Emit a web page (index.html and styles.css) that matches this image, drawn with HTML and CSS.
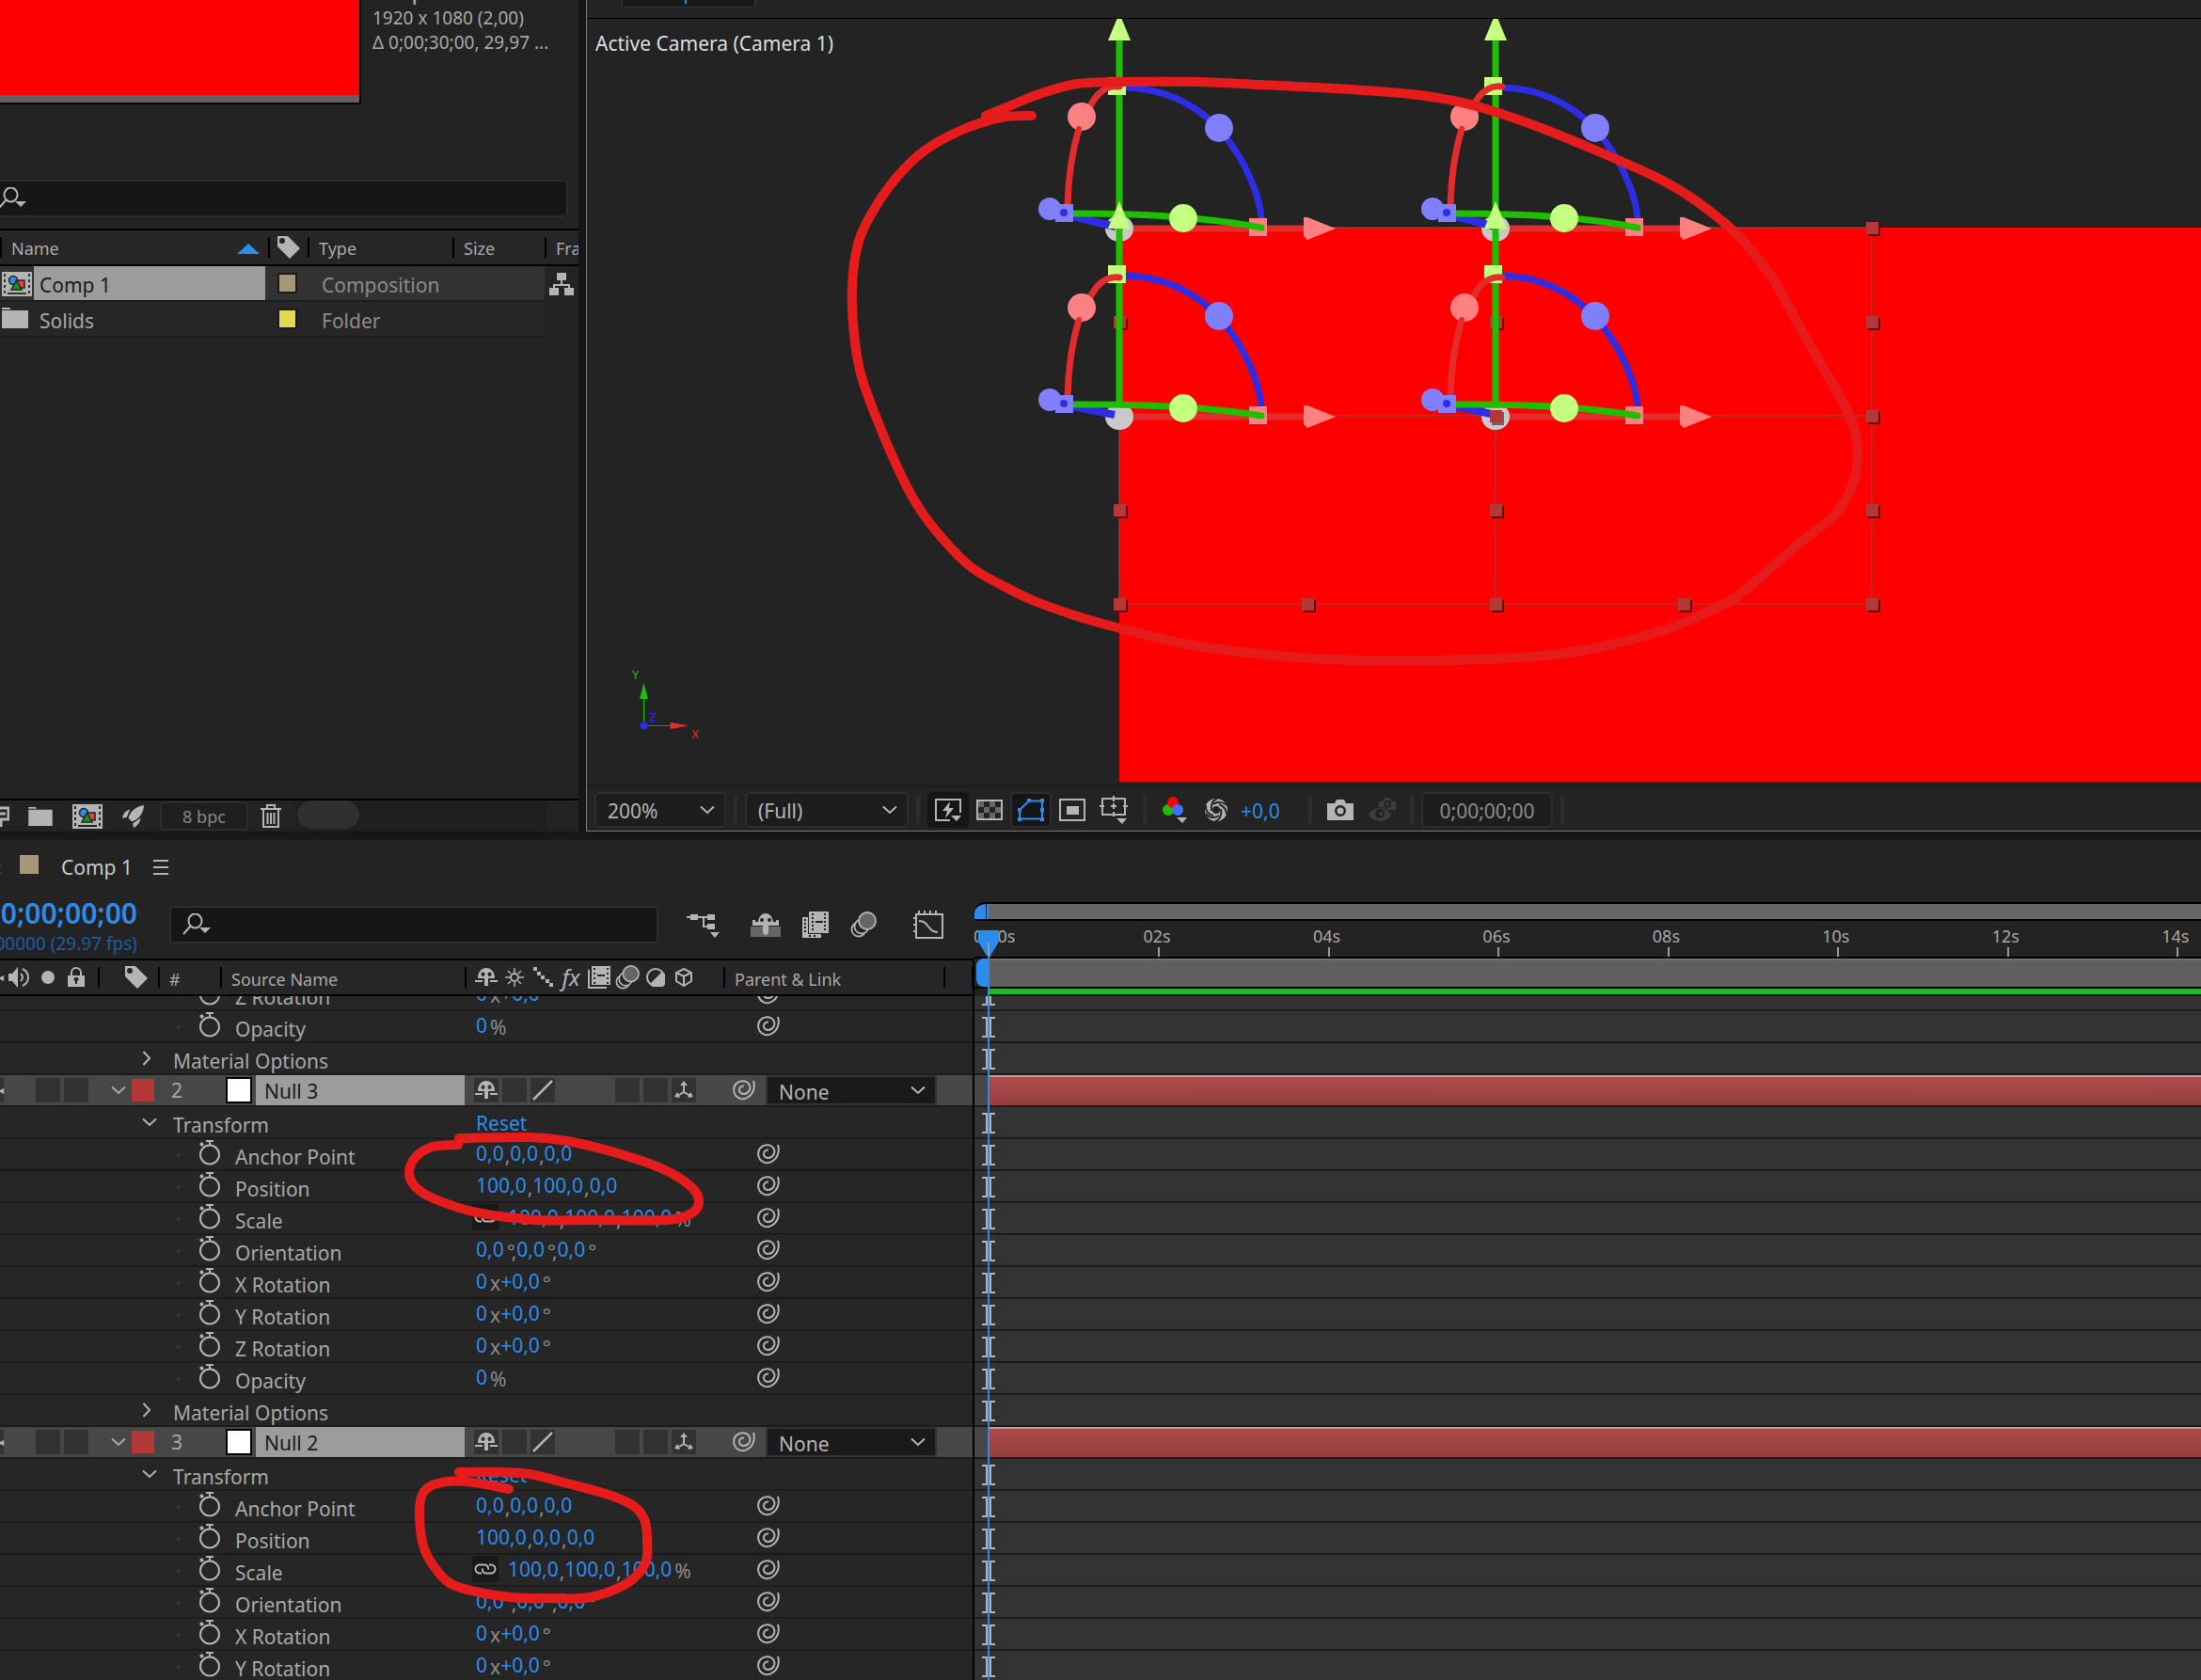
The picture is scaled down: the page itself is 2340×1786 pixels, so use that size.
FILE: index.html
```html
<!DOCTYPE html>
<html lang="en">
<head>
    <meta charset="UTF-8">
    <meta name="viewport" content="width=device-width, initial-scale=1.0">
    <title>Comp 1</title>
    <link rel="stylesheet" href="styles.css">
</head>
<body>
    <!-- Icon sprite -->
    <svg class="sprite" aria-hidden="true">
        <symbol id="i-chevron" viewBox="0 0 16 10"><path d="M1 1.500 8 8 15 1.500" fill="none" stroke="currentColor" stroke-width="2"/></symbol>
        <symbol id="i-chevron-right" viewBox="0 0 10 16"><path d="M1.500 1 8 8 1.500 15" fill="none" stroke="currentColor" stroke-width="2"/></symbol>
        <symbol id="i-search" viewBox="0 0 30 24">
            <ellipse cx="13.500" cy="8" rx="7" ry="7.500" fill="none" stroke="currentColor" stroke-width="2"/>
            <path d="M9 13 1 22" stroke="currentColor" stroke-width="2"/>
            <path d="M18 15h12l-6 6z" fill="currentColor"/>
        </symbol>
        <symbol id="i-tag" viewBox="0 0 24 24"><path fill-rule="evenodd" d="M0 0h11l13 13-11 11L0 11zM5 2a3 3 0 1 0 0 6 3 3 0 0 0 0-6z" fill="currentColor"/></symbol>
        <symbol id="i-folder" viewBox="0 0 28 22"><path d="M0 0h8l2 2H0zM0 3h28v19H0z" fill="currentColor"/></symbol>
        <symbol id="i-comp" viewBox="0 0 32 26">
            <path fill-rule="evenodd" d="M0 0h32v26H0zM2 2v3h2V2zm0 6v3h2V8zm0 6v3h2v-3zm0 6v3h2v-3zM28 2v3h2V2zm0 6v3h2V8zm0 6v3h2v-3zm0 6v3h2v-3zM6 22v2h20v-2z" fill="currentColor"/>
            <path d="M15 9h9v8h-9z" fill="#fa3b3b" stroke="#222" stroke-width="1.500"/>
            <circle cx="12" cy="9" r="4.500" fill="#2d8ceb" stroke="#222" stroke-width="1.500"/>
            <path d="M15.500 9 21 19H10z" fill="#0f9b14" stroke="#222" stroke-width="1.500"/>
        </symbol>
        <symbol id="i-flow" viewBox="0 0 26 24"><path d="M13 6v7M5 17v-4h16v4" fill="none" stroke="currentColor" stroke-width="2"/><path d="M8 0h10v8H8zM0 16h10v8H0zM16 16h10v8H16z" fill="currentColor"/></symbol>
        <symbol id="i-clock" viewBox="0 0 24 28">
            <circle cx="12" cy="16.500" r="10" fill="none" stroke="currentColor" stroke-width="2"/>
            <path d="M8 1h8v2h-3v3h-2V3H8zM1 5l3-2 2 3-3 2z" fill="currentColor"/>
        </symbol>
        <symbol id="i-whip" viewBox="0 0 24 22">
            <path d="M22 1C24 8 22 15 16 18.500 10 22.500 2 19 1.200 11.500 .5 5 6 1 11 1.200 17 1.500 20 7 17.500 11.500 15 16 8 16 7 11.500 6.500 8.500 9 6 12 6.500" fill="none" stroke="currentColor" stroke-width="2"/>
        </symbol>
        <symbol id="i-shy" viewBox="0 0 24 20">
            <path fill-rule="evenodd" d="M3 11C3 4 7 0 12 0s9 4 9 11h-7v8h-4v-8zM8.500 4.500a2 2.300 0 1 0 0 4.600 2 2.300 0 0 0 0-4.600zm7 0a2 2.300 0 1 0 0 4.600 2 2.300 0 0 0 0-4.600z" fill="currentColor"/>
            <path d="M0 13h8v2H0zM16 13h8v2h-8z" fill="currentColor"/>
        </symbol>
        <symbol id="i-link" viewBox="0 0 24 12">
            <path d="M8 10.500H6A4.500 4.500 0 0 1 6 1.500h5a4 4 0 0 1 4 5M16 1.500h2a4.500 4.500 0 0 1 0 9h-5a4 4 0 0 1-4-5" fill="none" stroke="currentColor" stroke-width="2"/>
        </symbol>
        <symbol id="i-blur" viewBox="0 0 28 28">
            <circle cx="9" cy="19" r="7.500" fill="#232323" stroke="currentColor" stroke-width="1.800"/>
            <circle cx="12" cy="16" r="7.500" fill="#232323" stroke="currentColor" stroke-width="1.800"/>
            <circle cx="18" cy="10" r="9" fill="#666" stroke="currentColor" stroke-width="1.800"/>
        </symbol>
        <symbol id="i-film" viewBox="0 0 24 24">
            <path d="M1 4v19h19" fill="none" stroke="currentColor" stroke-width="2"/>
            <path fill-rule="evenodd" d="M4 0h20v20H4zM6 2v2h2V2zm0 5v2h2V7zm0 5v2h2v-2zm0 5v2h2v-2zM20 2v2h2V2zm0 5v2h2V7zm0 5v2h2v-2zm0 5v2h2v-2zM10 9v2h8V9z" fill="currentColor"/>
        </symbol>
        <symbol id="i-slash" viewBox="0 0 24 24"><path d="M2 22 22 2" stroke="currentColor" stroke-width="2.500"/></symbol>
        <symbol id="i-axes" viewBox="0 0 20 20">
            <path d="M10 4v8L3 16M10 12l7 4" fill="none" stroke="currentColor" stroke-width="2"/>
            <path d="M10 0l4 5H6zM0 17l3-5 3 6zM20 17l-3-5-3 6z" fill="currentColor"/>
        </symbol>
        <symbol id="i-ibeam" viewBox="0 0 14 22"><path d="M0 1h14M0 21h14M5 1v20M9 1v20" stroke="currentColor" stroke-width="2"/></symbol>
        <!-- Parts of the 3D gizmo that keep the same spacing for every null -->
        <symbol id="gizmo" viewBox="0 0 320 280" overflow="visible">
            <ellipse cx="90" cy="223" rx="15" ry="14" fill="#c9c9c9"/>
            <path d="M105 223H290" stroke="#e42c2c" stroke-width="7"/>
            <path d="M286 211 290 211 320 223 290 235 286 231z" fill="#ff8080"/>
            <path d="M90 22V211" stroke="#1fbf00" stroke-width="7"/>
            <path d="M90-6 102 23H78z" fill="#c4ff80"/>
            <path d="M96 73C140 74 172 92 196 117 225 150 240 190 241 213" fill="none" stroke="#2d2de6" stroke-width="7"/>
            <circle cx="196" cy="116" r="15" fill="#8080ff"/>
            <path d="M228 212h19v19h-19z" fill="#ff8080"/>
            <path d="M78 62h19v19H78z" fill="#c4ff80"/>
        </symbol>
        <!-- Parts that shift with the perspective of the camera -->
        <symbol id="gizmo-left" viewBox="0 0 320 280" overflow="visible">
            <path d="M90 72C76 70 65 80 58 95M47 117C40 140 36 165 35 197" fill="none" stroke="#e42c2c" stroke-width="7" stroke-linecap="round"/>
            <circle cx="50" cy="104" r="15" fill="#ff8080"/>
            <path d="M47 117 44 128" stroke="#e42c2c" stroke-width="6" stroke-linecap="round"/>
            <circle cx="16" cy="202" r="12" fill="#8080ff"/>
            <path d="M22 197h19v19H22z" fill="#8080ff"/>
            <circle cx="31" cy="206" r="4" fill="#2d2de6"/>
        </symbol>
    </svg>

    <main class="workspace">
        <section class="upper">
            <!-- Project Panel -->
            <section class="project">
                <div class="project-info">
                    <div class="thumb"></div>
                    <div class="info-text">
                        <strong>Comp 1</strong>
                        <div>1920 x 1080 (2,00)</div>
                        <div>Δ 0;00;30;00, 29,97 ...</div>
                    </div>
                </div>
                <label class="search project-search">
                    <svg class="ic" width="30" height="24"><use href="#i-search"/></svg>
                    <input type="text" aria-label="Search project">
                </label>
                <table class="items">
                    <thead>
                        <tr>
                            <th class="c-name">Name <svg width="24" height="11"><path d="M0 11 12 0 24 11z" fill="#2d8ceb"/></svg></th>
                            <th class="c-label"><svg class="ic" width="24" height="24"><use href="#i-tag"/></svg></th>
                            <th class="c-type">Type</th>
                            <th class="c-size">Size</th>
                            <th class="c-rate">Fra</th>
                        </tr>
                    </thead>
                    <tbody>
                        <tr class="selected">
                            <td class="c-name"><svg class="ic" width="32" height="26"><use href="#i-comp"/></svg><span class="item-name">Comp 1</span></td>
                            <td class="c-label"><span class="swatch tan"></span></td>
                            <td class="c-type" colspan="2">Composition</td>
                            <td class="c-rate"><svg class="ic" width="26" height="24"><use href="#i-flow"/></svg></td>
                        </tr>
                        <tr>
                            <td class="c-name"><svg class="ic" width="28" height="22"><use href="#i-folder"/></svg><span class="item-name">Solids</span></td>
                            <td class="c-label"><span class="swatch yellow"></span></td>
                            <td class="c-type" colspan="2">Folder</td>
                            <td class="c-rate"></td>
                        </tr>
                    </tbody>
                </table>
                <footer class="project-bar">
                    <button aria-label="Interpret footage"><svg width="10" height="26"><path d="M0 4h9v12H0M0 10h6M1 16v8" fill="none" stroke="currentColor" stroke-width="3"/></svg></button>
                    <button aria-label="New folder"><svg width="26" height="20"><use href="#i-folder"/></svg></button>
                    <button aria-label="New composition"><svg width="34" height="26"><use href="#i-comp"/></svg></button>
                    <button aria-label="Project settings"><svg width="24" height="26" viewBox="0 0 26 26"><path d="M25 0C14 2 9 8 7 15l4 4C19 16 24 11 25 0zM9 5C4 6 1 10 0 15l5-1zM21 15c0 5-4 9-8 11l-1-5z" fill="currentColor"/></svg></button>
                    <button class="bpc">8 bpc</button>
                    <button aria-label="Delete"><svg width="22" height="26" viewBox="0 0 22 26"><path d="M0 5h22M7 5V1h8v4M3 5v19h16V5M7.500 9v12M11 9v12M14.500 9v12" fill="none" stroke="currentColor" stroke-width="2"/></svg></button>
                    <div class="scrollbar"><span></span></div>
                </footer>
            </section>

            <!-- Composition Viewer -->
            <section class="viewer">
                <div class="viewer-top"><span></span></div>
                <div class="canvas">
                    <svg class="scene" width="100%" height="100%">
                        <rect x="566" y="222" width="2000" height="589" fill="#f00"/>
                        <!-- Layer bounds -->
                        <path d="M566 222H1366V622H566V222M566 422H1366M966 422V622" fill="none" stroke="#a33" stroke-width="1.500"/>
                        <g id="handles"></g>
                        <g fill="none">
                            <use href="#gizmo" x="476" y="0" width="320" height="280"/>
                            <use href="#gizmo" x="876" y="0" width="320" height="280"/>
                            <path d="M516 210 562 221M923 210 966 221" stroke="#2d2de6" stroke-width="8"/>
                            <path d="M517 207Q640 207 717 222M924 207Q1045 207 1117 222" stroke="#1fbf00" stroke-width="7" stroke-linecap="round"/>
                            <circle cx="634" cy="212" r="15" fill="#c4ff80"/>
                            <circle cx="1039" cy="212" r="15" fill="#c4ff80"/>
                            <use href="#gizmo-left" x="476" y="0" width="320" height="280"/>
                            <use href="#gizmo-left" x="883" y="0" width="320" height="280"/>
                            <use href="#gizmo" x="476" y="200" width="320" height="280"/>
                            <use href="#gizmo" x="876" y="200" width="320" height="280"/>
                            <path d="M516 412 561 421M923 412 966 421" stroke="#2d2de6" stroke-width="8"/>
                            <path d="M517 410Q640 409 717 422M924 410Q1045 409 1117 422" stroke="#1fbf00" stroke-width="7" stroke-linecap="round"/>
                            <circle cx="634" cy="414" r="15" fill="#c4ff80"/>
                            <circle cx="1039" cy="414" r="15" fill="#c4ff80"/>
                            <use href="#gizmo-left" x="476" y="203" width="320" height="280"/>
                            <use href="#gizmo-left" x="883" y="203" width="320" height="280"/>
                        </g>
                        <path d="M962 418h13v14h-13z" fill="#666"/>
                        <path d="M960 416h13v13h-13z" fill="#b43838"/>
                        <!-- World axes -->
                        <path d="M60.500 722V747" stroke="#1fbf00"/>
                        <path d="M60.500 706 65 723h-9z" fill="#1fbf00"/>
                        <path d="M64 751.500H89" stroke="#e42c2c"/>
                        <path d="M89 748.500 106 751.500 89 754.500z" fill="#e42c2c" stroke="#e42c2c"/>
                        <circle cx="60.500" cy="751.500" r="4" fill="#2d2de6"/>
                        <g class="axis-text">
                            <text x="48" y="702" fill="#1fbf00">Y</text>
                            <text x="66" y="747" fill="#2d2de6">Z</text>
                            <text x="111" y="765" fill="#e42c2c">X</text>
                        </g>
                    </svg>
                    <div class="camera-name">Active Camera (Camera 1)</div>
                </div>
                <footer class="viewer-bar">
                    <span class="select zoom"><select aria-label="Magnification"><option>200%</option></select><svg width="16" height="10"><use href="#i-chevron"/></svg></span>
                    <i class="sep"></i>
                    <span class="select resolution"><select aria-label="Resolution"><option>(Full)</option></select><svg width="16" height="10"><use href="#i-chevron"/></svg></span>
                    <i class="sep"></i>
                    <div class="tools">
                        <button class="tool dark" aria-label="Fast previews"><svg width="30" height="26" viewBox="0 0 30 26"><path d="M17 24H2V2h26v14" fill="none" stroke="currentColor" stroke-width="2"/><path d="M17 4 9 14h5l-2 8 9-11h-5zM18 19h11l-5 6z" fill="currentColor"/></svg></button>
                        <button class="tool" aria-label="Transparency grid"><svg width="28" height="22" viewBox="0 0 28 22"><path d="M0 0h28v22H0z" fill="#b4b4b4"/><path d="M2 2h24v18H2z" fill="#222"/><path d="M2 2h6v6H2zM14 2h6v6h-6zM8 8h6v6H8zM20 8h6v6h-6zM2 14h6v6H2zM14 14h6v6h-6z" fill="#666"/></svg></button>
                        <button class="tool dark outlined" aria-label="Mask visibility"><svg width="28" height="24" viewBox="0 0 28 24"><path d="M12 2.500H26V21.500H2V12z" fill="none" stroke="#2d8ceb" stroke-width="2"/><path d="M10 0h4v4h-4zM24 0h4v4h-4zM24 10h4v4h-4zM24 20h4v4h-4zM0 20h4v4H0zM0 10h4v4H0z" fill="#2d8ceb"/></svg></button>
                        <button class="tool" aria-label="Region of interest"><svg width="28" height="24" viewBox="0 0 28 24"><path d="M1 1h26v22H1z" fill="none" stroke="currentColor" stroke-width="2"/><path d="M8 8h13v9H8z" fill="currentColor"/></svg></button>
                        <button class="tool" aria-label="Grid and guides"><svg width="30" height="30" viewBox="0 0 30 30"><path d="M3 3h24v17H3zM15 0v6M15 17v5M0 11h5M25 11h5M12 11h6M15 8v6" fill="none" stroke="currentColor" stroke-width="2"/><path d="M18 24h11l-5 6z" fill="currentColor"/></svg></button>
                    </div>
                    <i class="sep"></i>
                    <div class="exposure">
                        <button class="tool" aria-label="Channels"><svg width="26" height="30" viewBox="0 0 26 30"><circle cx="6" cy="15" r="6" fill="#1fbf00"/><circle cx="11" cy="7" r="6" fill="#f00"/><circle cx="16" cy="15" r="6" fill="#4070ff"/><path d="M15 23h11l-5 6z" fill="currentColor"/></svg></button>
                        <button class="tool" aria-label="Reset exposure"><svg width="26" height="26" viewBox="0 0 26 26"><circle cx="13" cy="13" r="12" fill="currentColor"/><path d="M14 1C9 3 7 8 8 14M24 8c-4-4-10-4-14-1M24 18c0-6-3-9-8-11M12 25c6-2 7-7 6-13M2 17c4 5 9 5 14 2M2 8c-1 6 3 10 8 11" fill="none" stroke="#232323" stroke-width="2"/><circle cx="13" cy="13" r="4" fill="#232323"/></svg></button>
                        <button class="hot">+0,0</button>
                    </div>
                    <i class="sep"></i>
                    <div class="snapshots">
                        <button class="tool" aria-label="Take snapshot"><svg width="28" height="22" viewBox="0 0 28 22"><path fill-rule="evenodd" d="M0 4h8l2-4h8l2 4h8v18H0zM14 6a6 6 0 1 0 0 12 6 6 0 0 0 0-12z" fill="currentColor"/><circle cx="14" cy="12" r="3.500" fill="currentColor"/></svg></button>
                        <button class="tool faded" aria-label="Show snapshot"><svg width="30" height="26" viewBox="0 0 30 26"><path d="M12 4h4l2-4h6l1 4h5v9H12z" fill="currentColor"/><circle cx="21" cy="7" r="3" fill="none" stroke="#232323" stroke-width="2"/><path d="M0 18C7 8 19 8 26 18 19 28 7 28 0 18z" fill="currentColor" stroke="#232323"/><circle cx="13" cy="17" r="5" fill="#232323"/><circle cx="14" cy="17" r="2" fill="currentColor"/></svg></button>
                    </div>
                    <i class="sep"></i>
                    <button class="preview-time">0;00;00;00</button>
                    <i class="sep"></i>
                </footer>
            </section>
        </section>

        <!-- Timeline -->
        <section class="timeline">
            <div class="outline">
                <div class="tab"><i>:</i><span class="tab-color"></span><span class="tab-name">Comp 1</span><button aria-label="Panel menu"><svg width="16" height="16"><path d="M0 1h16M0 8h16M0 15h16" stroke="currentColor" stroke-width="2"/></svg></button></div>
                <div class="controls">
                    <div class="time"><strong>0;00;00;00</strong><small>00000 (29.97 fps)</small></div>
                    <label class="search layer-search">
                        <svg class="ic" width="30" height="24"><use href="#i-search"/></svg>
                        <input type="text" aria-label="Search layers">
                    </label>
                    <div class="comp-switches">
                        <button aria-label="Mini-flowchart"><svg width="36" height="28" viewBox="0 0 36 28"><path d="M0 6h24M18 6v10h8" fill="none" stroke="currentColor" stroke-width="2"/><path d="M4 3h8v6H4zM22 3h8v6h-8zM22 13h8v6h-8zM25 22h10l-5 6z" fill="currentColor"/></svg></button>
                        <button aria-label="Hide shy layers"><svg width="32" height="28" viewBox="0 0 32 28"><path d="M0 16h32v11H0z" fill="#666"/><path d="M2 9h3v2h3C9 5 12 2 16 2s7 3 8 9h3V9h3v6h-11v8q-3 4-6 0v-8H2z" fill="currentColor"/><circle cx="12" cy="9" r="2" fill="#222"/><circle cx="20" cy="9" r="2" fill="#222"/></svg></button>
                        <button aria-label="Frame blending"><svg width="28" height="28" viewBox="0 0 28 28"><path d="M0 6h6v20H0zM0 24h20v4H0z" fill="currentColor"/><path d="M2 9h2M2 13h2M2 17h2M2 21h2M7 26h2M12 26h2" stroke="#222" stroke-width="2"/><path d="M7 0h21v23H7z" fill="currentColor"/><path d="M11 2v20M24 2v20" stroke="#222" stroke-width="2" stroke-dasharray="2 2"/><path d="M14 11h8" stroke="#222" stroke-width="2"/></svg></button>
                        <button aria-label="Motion blur"><svg width="28" height="28"><use href="#i-blur"/></svg></button>
                        <button aria-label="Graph editor"><svg width="32" height="30" viewBox="0 0 32 30"><path d="M3 4h28v25H3zM0 8h3M0 15h3M0 22h3M6 0v4M12 0v4M18 0v4M24 0v4" fill="none" stroke="currentColor" stroke-width="2"/><path d="M6 11c11 0 9 12 20 12" fill="none" stroke="currentColor" stroke-width="2"/></svg></button>
                    </div>
                </div>
                <div class="columns grid">
                    <div class="cell slots av">
                        <span>◂</span>
                        <span><svg width="24" height="22" viewBox="0 0 24 22"><path d="M0 7h4l6-7v22l-6-7H0z" fill="currentColor"/><path d="M13 7q4 4 0 8M15 2c8 4 8 14 0 18" fill="none" stroke="currentColor" stroke-width="2"/></svg></span>
                        <span><svg width="14" height="14"><circle cx="7" cy="7" r="7" fill="currentColor"/></svg></span>
                        <span><svg width="18" height="22" viewBox="0 0 18 22"><path d="M4 10V6a5 5 0 0 1 10 0v4" fill="none" stroke="currentColor" stroke-width="2"/><path fill-rule="evenodd" d="M0 9h18v12H0zM9 11a2 2 0 0 0-1 4v3h2v-3a2 2 0 0 0-1-4z" fill="currentColor"/></svg></span>
                    </div>
                    <div class="cell h-label"><svg class="ic" width="24" height="24"><use href="#i-tag"/></svg></div>
                    <div class="cell h-text">#</div>
                    <div class="cell h-text">Source Name</div>
                    <div class="cell slots">
                        <span><svg width="24" height="20"><use href="#i-shy"/></svg></span>
                        <span><svg width="20" height="20" viewBox="0 0 20 20"><circle cx="10" cy="10" r="4" fill="none" stroke="currentColor" stroke-width="2"/><path d="M10 0v5M10 15v5M0 10h5M15 10h5M3 3l3 3M14 14l3 3M3 17l3-3M14 6l3-3" stroke="currentColor" stroke-width="1.500"/></svg></span>
                        <span><svg width="22" height="22" viewBox="0 0 22 22"><path d="M1 0h4v4H1zM5 5h4v4H5zM9 9h4v4H9zM14 13h4v4h-4zM18 17h4v4h-4z" fill="currentColor"/></svg></span>
                        <span class="fx">fx</span>
                        <span><svg width="24" height="24"><use href="#i-film"/></svg></span>
                        <span><svg width="26" height="26"><use href="#i-blur"/></svg></span>
                        <span><svg width="20" height="20" viewBox="0 0 20 20"><circle cx="10" cy="10" r="9" fill="none" stroke="currentColor" stroke-width="2"/><path d="M17 4A9.500 9.500 0 1 1 4 17z" fill="currentColor"/></svg></span>
                        <span><svg width="20" height="20" viewBox="0 0 20 20"><path d="M10 1l8 4v9l-8 5-8-5V5zM2 5l8 4 8-4M10 9v10" fill="none" stroke="currentColor" stroke-width="2"/></svg></span>
                    </div>
                    <div class="cell h-text">Parent &amp; Link</div>
                    <div class="cell"></div>
                    <div class="cell"></div>
                </div>
                <div class="rows"><div class="rows-inner" id="outline-rows"></div></div>
            </div>

            <div class="track">
                <div class="navigator"><span></span></div>
                <div class="ruler">
                    <span>0:00s</span><span>02s</span><span>04s</span><span>06s</span><span>08s</span><span>10s</span><span>12s</span><span>14s</span>
                </div>
                <div class="work-area"><span></span></div>
                <div class="cache"></div>
                <div class="rows"><div class="rows-inner" id="track-rows"></div></div>
                <div class="playhead"><svg width="22" height="27"><path d="M0 0h22v12L13 27H9L0 12z" fill="#2d8ceb"/><path d="M11 13v14" stroke="#999" stroke-width="2"/></svg></div>
            </div>
        </section>

        <!-- Red pen marks -->
        <svg class="marks" id="marks" aria-hidden="true" fill="none" stroke="#e61c1c" stroke-width="10" stroke-linecap="round" stroke-linejoin="round"></svg>
    </main>

    <script>
        const use = (name, w, h) => `<svg width="${w}" height="${h}"><use href="#${name}"/></svg>`;

        // Wrap a list of values in hot text, separated by grey commas
        const values = (list, unit = '') => list
            .map(v => `<b>${v}</b>${unit === '°' ? '<u>°</u>' : ''}`)
            .join('<em>,</em>') + (unit === '%' ? '<u>%</u>' : '');

        const rotation = '<b>0</b><u>x</u><b>+0,0</b><u>°</u>';
        const lock = `<span class="link">${use('i-link', 24, 12)}</span>`;

        function properties(position) {
            return [
                ['Anchor Point', values(['0,0', '0,0', '0,0'])],
                ['Position', values(position)],
                ['Scale', lock + values(['100,0', '100,0', '100,0'], '%')],
                ['Orientation', values(['0,0', '0,0', '0,0'], '°')],
                ['X Rotation', rotation],
                ['Y Rotation', rotation],
                ['Z Rotation', rotation],
                ['Opacity', values(['0'], '%')]
            ];
        }

        function propertyRow([name, value]) {
            return `<div class="row grid property">
                <div class="prop-name"><i></i>${use('i-clock', 24, 28)}<span>${name}</span></div>
                <div class="values">${value}</div>
                <div class="whip">${use('i-whip', 24, 22)}</div>
            </div>`;
        }

        function groupRow(name, open) {
            return `<div class="row grid group">
                <div class="prop-name"><span class="twirl">${open ? use('i-chevron', 16, 10) : use('i-chevron-right', 10, 16)}</span><span>${name}</span></div>
                <div class="values">${open ? '<button class="hot">Reset</button>' : ''}</div>
            </div>`;
        }

        function layerRow(number, name) {
            return `<div class="row grid layer">
                <div class="slots av"><span class="box">◂</span><span></span><span class="box"></span><span class="box"></span></div>
                <div class="layer-label">${use('i-chevron', 16, 10)}<span></span></div>
                <div class="layer-num">${number}</div>
                <div class="layer-name"><i></i><span>${name}</span></div>
                <div class="slots"><span class="box">${use('i-shy', 24, 20)}</span><span class="box"></span><span class="box">${use('i-slash', 24, 24)}</span><span></span><span></span><span class="box"></span><span class="box"></span><span class="box">${use('i-axes', 20, 20)}</span></div>
                <div class="parent">${use('i-whip', 24, 22)}<span class="select"><select aria-label="Parent of ${name}"><option>None</option></select>${use('i-chevron', 16, 10)}</span></div>
            </div>`;
        }

        let outline = '';
        let track = '';
        function add(html, isLayer) {
            outline += html;
            track += isLayer ? '<div class="row bar"></div>' : `<div class="row">${use('i-ibeam', 14, 22)}</div>`;
        }

        // Tail of the layer above, scrolled half out of view
        properties([]).slice(-2).forEach(p => add(propertyRow(p)));
        add(groupRow('Material Options', false));

        [[2, 'Null 3', ['100,0', '100,0', '0,0']], [3, 'Null 2', ['100,0', '0,0', '0,0']]].forEach(([n, name, position]) => {
            add(layerRow(n, name), true);
            add(groupRow('Transform', true));
            properties(position).forEach(p => add(propertyRow(p)));
            add(groupRow('Material Options', false));
        });

        document.getElementById('outline-rows').innerHTML = outline;
        document.getElementById('track-rows').innerHTML = track;

        // Selection handles of the solid
        document.getElementById('handles').innerHTML = [
            [566, 322], [966, 322], [1366, 222], [1366, 322], [1366, 422], [566, 522], [966, 522], [1366, 522],
            [566, 622], [766, 622], [966, 622], [1166, 622], [1366, 622]
        ].map(([x, y]) => `<path d="M${x - 4} ${y - 4}h13v13h-13z" fill="#7d0000"/><path d="M${x - 6} ${y - 6}h13v13h-13z" fill="#b43838"/>`).join('');

        // Smooth curve through a list of points
        function stroke(points) {
            let d = `M${points[0]}`;
            for (let i = 0; i < points.length - 1; i++) {
                const p0 = points[i - 1] || points[i];
                const p1 = points[i];
                const p2 = points[i + 1];
                const p3 = points[i + 2] || p2;
                const c1 = [p1[0] + (p2[0] - p0[0]) / 6, p1[1] + (p2[1] - p0[1]) / 6];
                const c2 = [p2[0] - (p3[0] - p1[0]) / 6, p2[1] - (p3[1] - p1[1]) / 6];
                d += `C${c1} ${c2} ${p2}`;
            }
            return `<path d="${d}"/>`;
        }

        document.getElementById('marks').innerHTML = [
            [[1097, 123], [1064, 125], [1023, 138], [983, 160], [952, 190], [926, 228], [912, 260], [906, 305], [908, 355], [915, 397],
             [930, 440], [951, 490], [971, 530], [994, 563], [1030, 601], [1065, 622], [1100, 639], [1145, 655], [1191, 668], [1262, 685], [1337, 695],
             [1395, 700], [1451, 702], [1520, 702], [1573, 701], [1630, 698], [1680, 692], [1730, 681], [1775, 668], [1812, 652], [1844, 636], [1880, 606], [1915, 576],
             [1951, 547], [1970, 515], [1975, 485], [1971, 455], [1958, 425], [1922, 363], [1887, 300], [1855, 258], [1831, 235],
             [1795, 208], [1760, 188], [1697, 160], [1641, 137], [1590, 119], [1550, 108], [1499, 100], [1420, 94], [1340, 90], [1273, 87],
             [1191, 87], [1145, 89], [1105, 100], [1075, 112], [1048, 123]],
            [[487, 1217], [460, 1219], [442, 1230], [435, 1247], [442, 1262], [463, 1275], [507, 1289], [570, 1297], [627, 1297],
             [707, 1297], [735, 1290], [743, 1276], [733, 1260], [703, 1242], [653, 1225], [603, 1213], [563, 1209], [488, 1210]],
            [[488, 1565], [530, 1565], [563, 1567], [603, 1577], [650, 1590], [675, 1602], [686, 1618], [688, 1640], [686, 1662],
             [667, 1683], [627, 1698], [585, 1699], [543, 1698], [487, 1687], [465, 1670], [450, 1643], [446, 1603], [453, 1583], [475, 1575], [503, 1576], [541, 1583]]
        ].map(stroke).join('');
    </script>
</body>
</html>
```

FILE: styles.css
```css
/* General Reset */
* {
    box-sizing: border-box;
}

body {
    margin: 0;
    background: #161616;
    color: #a8a8a8;
    font-family: "Noto Sans", "Open Sans", sans-serif;
    font-size: 21px;
    overflow: hidden;
}

svg {
    display: block;
    flex: none;
}

button, input, select {
    margin: 0;
    padding: 0;
    border: none;
    background: none;
    color: inherit;
    font: inherit;
    outline: none;
}

select {
    appearance: none;
}

i, em {
    font-style: normal;
}

.sprite {
    position: absolute;
    width: 0;
    height: 0;
}

.ic, button {
    color: #b4b4b4;
}

.workspace {
    position: relative;
    height: 100vh;
    display: grid;
    grid-template-rows: 99fr 100fr;
    gap: 9px;
}

.upper {
    display: flex;
    gap: 8px;
    min-height: 0;
}

/* Search fields */
.search {
    display: flex;
    align-items: center;
    height: 40px;
    border: 2px solid #2d2d2d;
    border-radius: 5px;
    background: #161616;
}

.search input {
    flex: 1;
    min-width: 0;
}

/* Project Panel */
.project {
    width: 615px;
    display: flex;
    flex-direction: column;
    background: #232323;
    overflow: hidden;
}

.project-info {
    display: flex;
    gap: 12px;
    height: 191px;
}

.thumb {
    flex: none;
    width: 384px;
    height: 111px;
    background: #f00;
    border: solid #000;
    border-width: 0 2px 2px 0;
    box-shadow: inset 0 -8px #616161;
}

.info-text {
    margin-top: -20px;
    font-size: 19px;
    line-height: 26px;
    white-space: nowrap;
}

.info-text strong {
    display: block;
    font-weight: 600;
}

.project-search {
    margin: 0 11px 12px -9px;
    padding-left: 5px;
}

.items {
    width: 100%;
    table-layout: fixed;
    border-collapse: collapse;
    border-top: 2px solid #000;
}

.items th {
    height: 38px;
    padding: 2px 0 0 12px;
    border-bottom: 2px solid #000;
    background: #262626 linear-gradient(#000, #000) left center / 2px 22px no-repeat;
    font-size: 18px;
    font-weight: 400;
    text-align: left;
}

.items th.c-name {
    width: 285px;
}

.items th.c-label {
    width: 42px;
    padding: 0 0 0 10px;
}

.items th.c-type {
    width: 154px;
}

.items th.c-size {
    width: 98px;
}

.items th svg {
    float: right;
    margin: 7px 9px 0 0;
}

.items th.c-label svg {
    float: none;
    margin: 0;
}

.items td {
    height: 38px;
    padding: 0;
    border-bottom: 2px solid #1c1c1c;
    background: #262626;
    color: #8c8c8c;
}

.items td.c-name {
    vertical-align: top;
}

.items td.c-name svg {
    float: left;
    margin: 6px 0 0 2px;
}

.items td.c-label {
    padding-left: 10px;
}

.items td.c-type {
    padding: 4px 0 0 15px;
}

.items td.c-rate {
    background: #232323;
    padding-left: 5px;
    border: none;
}

.items .selected td {
    background: #323232;
}

.items .selected td.c-rate {
    background: #232323;
}

.item-name {
    display: block;
    height: 36px;
    margin: 0 3px 0 36px;
    padding-left: 6px;
    line-height: 40px;
    color: #a8a8a8;
}

.selected .item-name {
    background: #9c9c9c;
    color: #1a1a1a;
}

.swatch {
    display: block;
    width: 21px;
    height: 22px;
    border: 2px solid #191919;
}

.tan {
    background: #a89678;
}

.yellow {
    background: #e3d94d;
}

.project-bar {
    margin-top: auto;
    display: flex;
    align-items: center;
    height: 35px;
    border-top: 2px solid #000;
    gap: 20px;
}

.project-bar .bpc {
    width: 94px;
    height: 31px;
    margin-left: -4px;
    margin-right: -7px;
    padding-top: 2px;
    border: 2px solid #2d2d2d;
    border-radius: 4px;
    background: #1f1f1f;
    color: #888;
    font-size: 18px;
    line-height: 25px;
}

.scrollbar {
    width: 266px;
    height: 33px;
    margin-left: -5px;
    padding: 0 2px;
    background: #1f1f1f;
}

.scrollbar span {
    display: block;
    width: 66px;
    height: 30px;
    border-radius: 15px;
    background: #303030;
}

/* Viewer */
.viewer {
    flex: 1;
    min-width: 0;
    display: flex;
    flex-direction: column;
    background: #232323;
    border: solid #2d8ceb;
    border-width: 0 0 1px 1px;
}

.viewer-top {
    height: 20px;
    padding-left: 36px;
    border-bottom: 1px solid #000;
}

.viewer-top span {
    display: block;
    width: 144px;
    height: 9px;
    border: solid #2d2d2d;
    border-width: 0 2px 2px;
    border-radius: 0 0 4px 4px;
    background: linear-gradient(#2d8ceb, #2d8ceb) 66px 0 / 2px 4px no-repeat #191919;
}

.canvas {
    position: relative;
    flex: 1;
    min-height: 0;
    overflow: hidden;
    border-bottom: 1px solid #161616;
}

.camera-name {
    position: absolute;
    left: 9px;
    top: 12px;
    line-height: 28px;
    color: #dcdcdc;
}

.axis-text {
    font: 12px "DejaVu Sans", sans-serif;
}

.viewer-bar {
    display: flex;
    align-items: center;
    height: 47px;
    padding: 2px 0 0 8px;
    color: #b4b4b4;
}

.sep {
    width: 4px;
    height: 30px;
    margin: 0 8px;
    background: #2d2d2d;
}

.select {
    position: relative;
    display: block;
    height: 38px;
    border: 2px solid #2d2d2d;
    border-radius: 5px;
    background: #1d1d1d;
}

.select select {
    width: 100%;
    height: 100%;
    padding: 2px 0 0 12px;
}

.select svg {
    position: absolute;
    right: 10px;
    top: 12px;
    pointer-events: none;
}

.zoom {
    width: 140px;
}

.resolution {
    width: 174px;
}

.tool {
    display: flex;
    align-items: center;
    justify-content: center;
    width: 44px;
    height: 38px;
    border-radius: 5px;
}

.dark {
    background: #161616;
}

.outlined {
    border: 2px solid #2d2d2d;
}

.faded {
    color: #3c3c3c;
}

.tools {
    display: flex;
    margin-right: 1px;
}

.exposure {
    display: flex;
    width: 156px;
}

.hot {
    color: #2d8ceb;
}

.exposure .hot {
    margin-left: 4px;
    padding-top: 3px;
}

.snapshots {
    display: flex;
    width: 88px;
}

.preview-time {
    width: 140px;
    height: 38px;
    padding-top: 2px;
    border: 2px solid #2d2d2d;
    border-radius: 5px;
    background: #1d1d1d;
    color: #8c8c8c;
}

/* Timeline */
.timeline {
    display: grid;
    grid-template-columns: 1036px 1fr;
    min-height: 0;
    background: #232323;
}

.outline {
    display: flex;
    flex-direction: column;
    min-height: 0;
}

.tab {
    display: flex;
    align-items: center;
    height: 58px;
    color: #c8c8c8;
}

.tab i {
    width: 21px;
    margin-left: -4px;
}

.tab-color {
    width: 20px;
    height: 20px;
    margin: 0 24px 6px 4px;
    background: #a89678;
}

.tab-name {
    margin-right: 22px;
}

.controls {
    display: flex;
    height: 68px;
}

.time {
    display: flex;
    flex-direction: column;
    align-items: flex-end;
    width: 146px;
    overflow: hidden;
    white-space: nowrap;
    color: #2d8ceb;
}

.time strong {
    font-size: 30px;
    font-weight: 600;
    line-height: 40px;
}

.time small {
    font-size: 19px;
    line-height: 24px;
    color: #1a5ca3;
}

.layer-search {
    flex: none;
    width: 520px;
    margin: 12px 0 0 34px;
    padding-left: 12px;
}

.comp-switches {
    display: flex;
    align-items: center;
    height: 64px;
    margin-left: 30px;
    gap: 23px;
}

.comp-switches button:nth-child(2) {
    margin-left: 9px;
}

.comp-switches button:last-child {
    margin-left: 16px;
}

.grid {
    display: grid;
    grid-template-columns: 104px 64px 66px 260px 275px 234px 30px 1fr;
}

.columns {
    height: 40px;
    border: solid #000;
    border-width: 2px 0;
    background: #262626;
    font-size: 18px;
    overflow: hidden;
}

.cell {
    display: flex;
    align-items: center;
    height: 36px;
}

.cell + .cell {
    background: linear-gradient(#000, #000) left center / 2px 22px no-repeat;
}

.h-label {
    padding-left: 29px;
}

.h-text {
    padding: 3px 0 0 12px;
}

.slots {
    display: flex;
    align-items: center;
    gap: 4px;
    padding-left: 10px;
    color: #b4b4b4;
}

.slots span {
    flex: none;
    display: flex;
    align-items: center;
    justify-content: center;
    width: 26px;
    height: 26px;
    line-height: 26px;
}

.slots .box {
    background: #323232;
}

.av {
    margin-left: -22px;
    padding-left: 0;
}

.av span:first-child {
    justify-content: flex-end;
    font-size: 12px;
}

.slots .fx {
    font-size: 24px;
    font-style: italic;
}

.rows {
    flex: 1;
    min-height: 0;
    overflow: hidden;
}

.rows-inner {
    margin-top: -18px;
}

.outline .rows, .outline .columns {
    border-right: 2px solid #000;
}

.row {
    height: 34px;
    border-bottom: 2px solid #1c1c1c;
    background: #262626;
}

.prop-name {
    grid-column: 1 / 5;
    display: flex;
    height: 32px;
    line-height: 38px;
}

.property .prop-name {
    padding-left: 188px;
}

.prop-name i {
    width: 4px;
    height: 4px;
    margin: 15px 19px 0 0;
    border-radius: 2px;
    background: #363636;
}

.prop-name svg {
    margin-right: 15px;
    color: #b4b4b4;
}

.group .prop-name {
    padding-left: 151px;
}

.twirl {
    display: flex;
    align-items: center;
    width: 33px;
    height: 32px;
}

.values {
    display: flex;
    height: 32px;
    padding-left: 12px;
    line-height: 30px;
    color: #8c8c8c;
}

.values b {
    font-weight: 400;
    color: #2d8ceb;
}

.values em, .values u {
    padding: 2px 0 0 1px;
    text-decoration: none;
}

.values u {
    padding-left: 3px;
}

.values u + em {
    margin-left: -5px;
}

.values .hot {
    height: 32px;
    padding-top: 2px;
    line-height: 30px;
}

.link {
    display: flex;
    align-items: center;
    justify-content: center;
    width: 28px;
    height: 28px;
    margin: 1px 10px 0 -4px;
    background: #191919;
    color: #b4b4b4;
}

.whip {
    padding: 5px 0 0 36px;
    color: #b4b4b4;
}

.layer {
    line-height: 32px;
    background: #474747;
}

.layer-label {
    display: flex;
    align-items: center;
    gap: 6px;
    padding-left: 14px;
}

.layer-label span {
    width: 24px;
    height: 24px;
    background: #b43838;
}

.layer-num {
    padding-left: 14px;
}

.layer-name {
    display: flex;
    align-items: center;
    padding-left: 6px;
    gap: 4px;
}

.layer-name i {
    width: 28px;
    height: 28px;
    border: 2px solid #000;
    background: #fff;
}

.layer-name span {
    flex: 1;
    height: 32px;
    padding-left: 9px;
    line-height: 34px;
    background: #9c9c9c;
    color: #1a1a1a;
}

.parent {
    display: flex;
    align-items: center;
    gap: 11px;
    padding-left: 10px;
    color: #b4b4b4;
}

.parent .select {
    width: 182px;
    height: 32px;
    border-color: #333;
    border-radius: 0;
    background: #1a1a1a;
    line-height: 28px;
}

.parent .select svg {
    top: 9px;
}

/* Time graph side */
.track {
    position: relative;
    display: flex;
    flex-direction: column;
    min-width: 0;
    min-height: 0;
    padding-top: 66px;
    overflow: hidden;
}

.navigator {
    height: 20px;
    padding-left: 13px;
    border: solid #000;
    border-width: 2px 0;
    background: #232323 linear-gradient(#2d8ceb, #2d8ceb) 0 0 / 12px 16px no-repeat;
    border-radius: 12px 0 0 0;
}

.navigator span {
    display: block;
    height: 16px;
    border-left: 2px solid #2d8ceb;
    background: #666;
}

.ruler {
    display: flex;
    height: 38px;
    margin-left: 15px;
    font-size: 18px;
    line-height: 32px;
}

.ruler span {
    flex: none;
    width: 14%;
    text-indent: -16px;
    background: linear-gradient(#999, #999) left bottom / 2px 10px no-repeat;
}

.work-area {
    height: 34px;
    padding-left: 2px;
    border: solid #000;
    border-width: 2px 0;
}

.work-area span {
    display: block;
    height: 30px;
    border-left: 12px solid #2d8ceb;
    border-radius: 8px 0 0 8px;
    background: #5f5f5f;
    box-shadow: inset 0 2px #707070;
}

.cache {
    height: 8px;
    margin-left: 16px;
    border-bottom: 2px solid #000;
    background: #13c024;
}

.track .row {
    padding: 6px 0 0 8px;
    background: #333;
    color: #b4b4b4;
}

.track .bar {
    background: linear-gradient(#cf9696 2px, #b04a4a 2px, #943e40 32px) 16px 0 no-repeat #474747;
}

.playhead {
    position: absolute;
    left: 14px;
    top: 96px;
    bottom: 0;
    width: 2px;
    background: #2d8ceb;
}

.playhead svg {
    margin-left: -10px;
}

/* Pen marks drawn over everything */
.marks {
    position: absolute;
    left: 0;
    top: 0;
    width: 100%;
    height: 100%;
    pointer-events: none;
}
```
